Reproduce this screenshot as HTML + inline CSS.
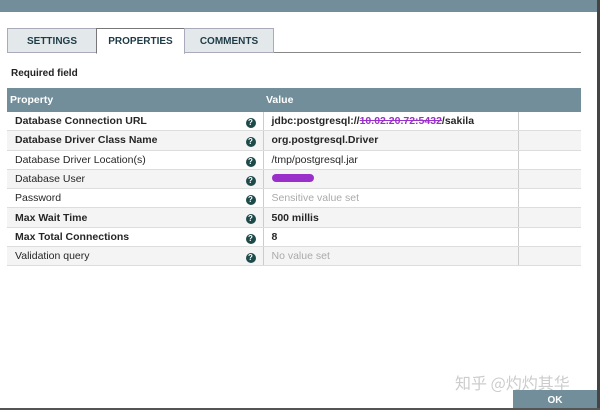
<!DOCTYPE html>
<html><head><style>
body{margin:0;width:600px;height:410px;background:#fff;font-family:"Liberation Sans",sans-serif;position:relative;overflow:hidden}
.top{position:absolute;left:0;top:0;width:600px;height:12px;background:#728e9b}
.rb{position:absolute;right:0;top:0;width:3px;height:410px;background:#444}
.bb{position:absolute;left:0;bottom:0;width:600px;height:2px;background:#555}
.tab{position:absolute;top:28px;height:25px;box-sizing:border-box;border:1px solid #aab;background:#e3e8eb;font-size:10px;font-weight:bold;color:#1e3c46;text-align:center;line-height:25px}
.line{position:absolute;left:7px;top:52px;width:574px;height:1px;background:#888}
.req{position:absolute;left:11px;top:68px;font-size:10px;font-weight:bold;color:#222}
table{position:absolute;left:7px;top:88px;width:574px;border-collapse:collapse;font-size:10.5px}
th{background:#728e9b;color:#fff;text-align:left;height:24px;padding:0 0 0 3px;font-weight:bold}
td{height:18.3px;padding:0 0 0 8px;border-bottom:1px solid #ddd;color:#262626;position:relative}
tr:nth-child(odd) td{background:#f4f4f4}
td.v{border-left:1px solid #ccc;padding-left:8px}
td.e{border-left:1px solid #ccc;width:54px}
.b{font-weight:bold}
.g{color:#aaa}
.q{position:absolute;right:7px;top:6px;width:10px;height:10px;border-radius:50%;background:#1e4a4a;color:#fff;font-size:8px;line-height:10px;text-align:center;font-weight:bold}
.ok{position:absolute;left:513px;top:390px;width:84px;height:20px;background:#728e9b;color:#fff;font-size:10px;font-weight:bold;text-align:center;line-height:22px}
.wm{position:absolute;left:455px;top:370px;font-size:16px;color:#ccc;font-family:"Noto Sans CJK SC",sans-serif}
</style></head><body>
<div class="top"></div>
<div class="line"></div>
<div class="tab" style="left:7px;width:90px">SETTINGS</div>
<div class="tab" style="left:96px;width:89px;background:#fff;border-color:#777;border-bottom-color:#fff;height:26px">PROPERTIES</div>
<div class="tab" style="left:184px;width:90px">COMMENTS</div>
<div class="req">Required field</div>
<table>
<tr><th style="width:253px">Property</th><th colspan="2">Value</th></tr>
<tr><td class="b">Database Connection URL<span class="q">?</span></td><td class="v b">jdbc:postgresql://<span style="color:#9b2fc9;text-decoration:line-through">10.02.20.72:5432</span>/sakila</td><td class="e"></td></tr>
<tr><td class="b">Database Driver Class Name<span class="q">?</span></td><td class="v b">org.postgresql.Driver</td><td class="e"></td></tr>
<tr><td>Database Driver Location(s)<span class="q">?</span></td><td class="v">/tmp/postgresql.jar</td><td class="e"></td></tr>
<tr><td>Database User<span class="q">?</span></td><td class="v"><span style="display:inline-block;width:42px;height:8px;border-radius:5px;background:#9b2fc9"></span></td><td class="e"></td></tr>
<tr><td>Password<span class="q">?</span></td><td class="v g">Sensitive value set</td><td class="e"></td></tr>
<tr><td class="b">Max Wait Time<span class="q">?</span></td><td class="v b">500 millis</td><td class="e"></td></tr>
<tr><td class="b">Max Total Connections<span class="q">?</span></td><td class="v b">8</td><td class="e"></td></tr>
<tr><td>Validation query<span class="q">?</span></td><td class="v g">No value set</td><td class="e"></td></tr>
</table>
<div class="wm">知乎 @灼灼其华</div>
<div class="ok">OK</div>
<div class="rb"></div>
<div class="bb"></div>
</body></html>
